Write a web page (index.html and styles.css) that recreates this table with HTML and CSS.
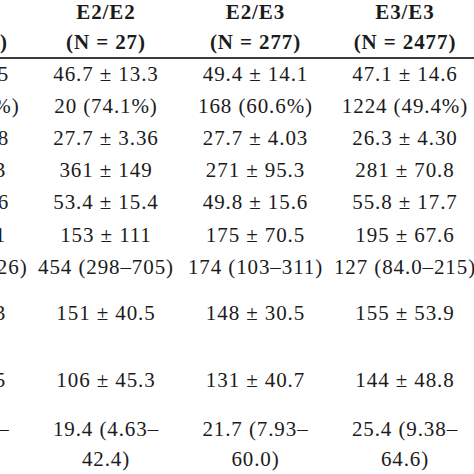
FILE: index.html
```html
<!DOCTYPE html>
<html lang="en">
<head>
<meta charset="utf-8">
<title>Table</title>
<link rel="stylesheet" href="styles.css">
</head>
<body>
<div class="page">
<table class="data">
  <colgroup>
    <col class="c"><col class="c"><col class="c"><col class="c">
  </colgroup>
  <thead>
    <tr>
      <th>Total<br>(N = 2781)</th>
      <th>E2/E2<br>(N = 27)</th>
      <th>E2/E3<br>(N = 277)</th>
      <th>E3/E3<br>(N = 2477)</th>
    </tr>
  </thead>
  <tbody>
    <tr><td>47.1 ± 14.5</td><td>46.7 ± 13.3</td><td>49.4 ± 14.1</td><td>47.1 ± 14.6</td></tr>
    <tr><td>1412 (50.7%)</td><td>20 (74.1%)</td><td>168 (60.6%)</td><td>1224 (49.4%)</td></tr>
    <tr><td>26.4 ± 4.28</td><td>27.7 ± 3.36</td><td>27.7 ± 4.03</td><td>26.3 ± 4.30</td></tr>
    <tr><td>285 ± 78.3</td><td>361 ± 149</td><td>271 ± 95.3</td><td>281 ± 70.8</td></tr>
    <tr><td>55.3 ± 17.6</td><td>53.4 ± 15.4</td><td>49.8 ± 15.6</td><td>55.8 ± 17.7</td></tr>
    <tr><td>192 ± 68.1</td><td>153 ± 111</td><td>175 ± 70.5</td><td>195 ± 67.6</td></tr>
    <tr><td>131 (86.5–226)</td><td>454 (298–705)</td><td>174 (103–311)</td><td>127 (84.0–215)</td></tr>
    <tr class="r8"><td>154 ± 51.3</td><td>151 ± 40.5</td><td>148 ± 30.5</td><td>155 ± 53.9</td></tr>
    <tr class="r9"><td>142 ± 48.5</td><td>106 ± 45.3</td><td>131 ± 40.7</td><td>144 ± 48.8</td></tr>
    <tr class="r10"><td>24.9 (9.08–<br>63.7)</td><td>19.4 (4.63–<br>42.4)</td><td>21.7 (7.93–<br>60.0)</td><td>25.4 (9.38–<br>64.6)</td></tr>
  </tbody>
</table>
</div>
</body>
</html>
```
FILE: styles.css
```css
html, body {
  margin: 0;
  padding: 0;
  background: #ffffff;
}
body {
  width: 474px;
  height: 474px;
  overflow: hidden;
}
.page {
  width: 474px;
  height: 474px;
  overflow: hidden;
}
.data {
  table-layout: fixed;
  border-collapse: collapse;
  width: 598px;
  margin-left: -118.25px;
  margin-top: -3.5px;
  font-family: "Liberation Serif", "Times New Roman", serif;
  font-size: 21px;
  letter-spacing: 0.9px;
  color: #1b1b1b;
}
.c {
  width: 149.5px;
}
.data th,
.data td {
  text-align: center;
  white-space: nowrap;
  vertical-align: top;
  line-height: 30px;
  padding: 0;
}
.data th {
  font-weight: bold;
  border-bottom: 2px solid #3a3a3a;
}
.data td {
  padding-bottom: 2.2px;
}
.data tr:first-child td {
  padding-top: 0.1px;
}
.r8 td {
  padding-top: 14.5px;
  padding-bottom: 14.5px;
}
.r9 td {
  padding-top: 22.5px;
  padding-bottom: 9.2px;
}
.r10 td {
  padding-top: 9.3px;
  padding-bottom: 0;
}
```
